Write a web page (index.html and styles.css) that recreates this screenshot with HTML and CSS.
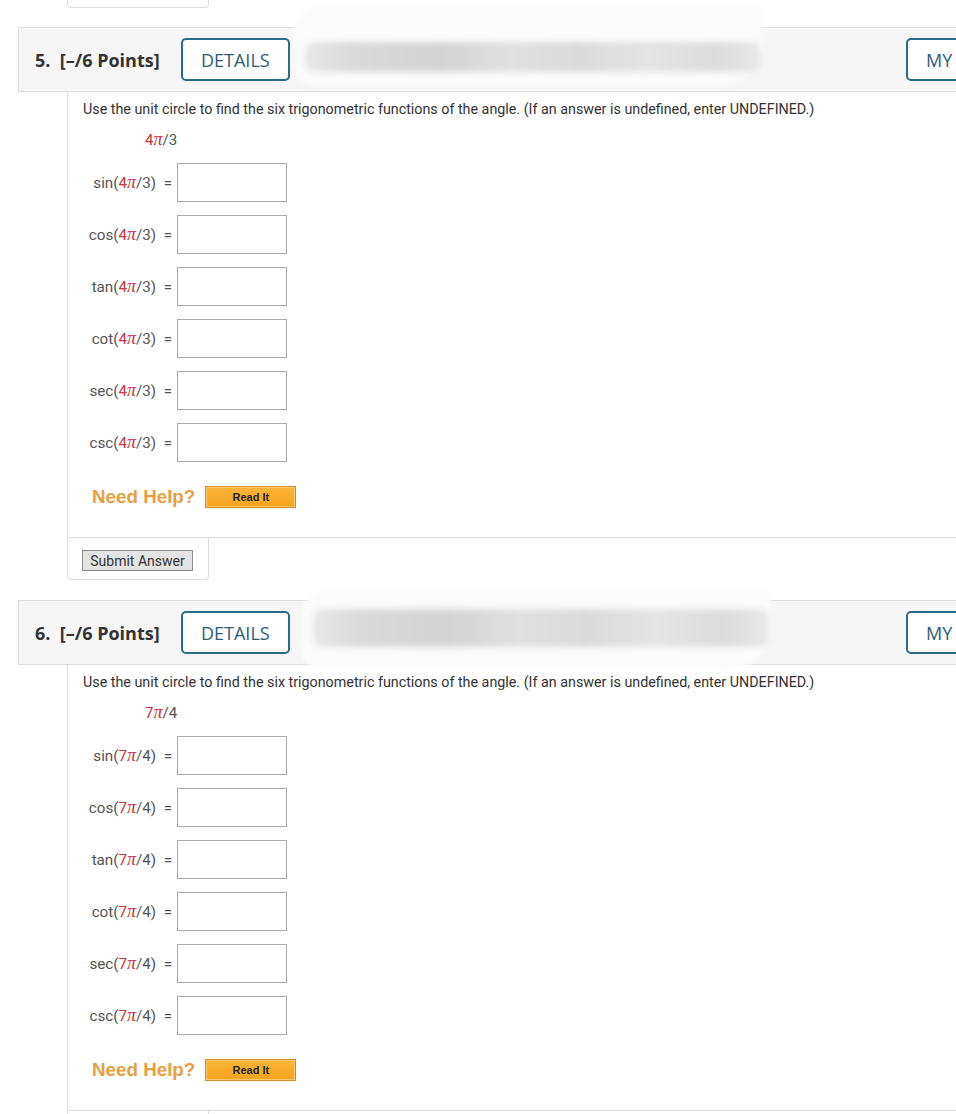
FILE: index.html
```html
<!DOCTYPE html>
<html>
	<head>
		<link rel="stylesheet" href="styles.css">
		<title>Unit circle questions</title>
	</head>
	<body>
		<div class="prevSubmit"></div>

		<!-- question 5 -->
		<div class="question">
			<div class="qhead">
				<span class="qtitle">5.&nbsp; [&ndash;/6 Points]</span>
				<span class="headButton">DETAILS</span>
				<span class="headButton myButton">MY</span>
				<div class="smear"><div class="smearBand"></div></div>
			</div>
			<div class="qbody">
				<div class="prompt">Use the unit circle to find the six trigonometric functions of the angle. (If an answer is undefined, enter UNDEFINED.)</div>
				<div class="angle"><span class="red">4<i class="pi">&pi;</i></span>/3</div>
				<div class="row"><span class="lbl">sin(<span class="red">4<i class="pi">&pi;</i></span>/3)&nbsp; =</span><input class="answer" type="text"></div>
				<div class="row"><span class="lbl">cos(<span class="red">4<i class="pi">&pi;</i></span>/3)&nbsp; =</span><input class="answer" type="text"></div>
				<div class="row"><span class="lbl">tan(<span class="red">4<i class="pi">&pi;</i></span>/3)&nbsp; =</span><input class="answer" type="text"></div>
				<div class="row"><span class="lbl">cot(<span class="red">4<i class="pi">&pi;</i></span>/3)&nbsp; =</span><input class="answer" type="text"></div>
				<div class="row"><span class="lbl">sec(<span class="red">4<i class="pi">&pi;</i></span>/3)&nbsp; =</span><input class="answer" type="text"></div>
				<div class="row"><span class="lbl">csc(<span class="red">4<i class="pi">&pi;</i></span>/3)&nbsp; =</span><input class="answer" type="text"></div>
				<div class="help">
					<span class="needHelp">Need Help?</span>
					<span class="readIt">Read It</span>
				</div>
			</div>
			<div class="submitBox"><button class="submitButton">Submit Answer</button></div>
		</div>

		<!-- question 6 -->
		<div class="question">
			<div class="qhead">
				<span class="qtitle">6.&nbsp; [&ndash;/6 Points]</span>
				<span class="headButton">DETAILS</span>
				<span class="headButton myButton">MY</span>
				<div class="smear smear6"><div class="smearBand"></div></div>
			</div>
			<div class="qbody">
				<div class="prompt">Use the unit circle to find the six trigonometric functions of the angle. (If an answer is undefined, enter UNDEFINED.)</div>
				<div class="angle"><span class="red">7<i class="pi">&pi;</i></span>/4</div>
				<div class="row"><span class="lbl">sin(<span class="red">7<i class="pi">&pi;</i></span>/4)&nbsp; =</span><input class="answer" type="text"></div>
				<div class="row"><span class="lbl">cos(<span class="red">7<i class="pi">&pi;</i></span>/4)&nbsp; =</span><input class="answer" type="text"></div>
				<div class="row"><span class="lbl">tan(<span class="red">7<i class="pi">&pi;</i></span>/4)&nbsp; =</span><input class="answer" type="text"></div>
				<div class="row"><span class="lbl">cot(<span class="red">7<i class="pi">&pi;</i></span>/4)&nbsp; =</span><input class="answer" type="text"></div>
				<div class="row"><span class="lbl">sec(<span class="red">7<i class="pi">&pi;</i></span>/4)&nbsp; =</span><input class="answer" type="text"></div>
				<div class="row"><span class="lbl">csc(<span class="red">7<i class="pi">&pi;</i></span>/4)&nbsp; =</span><input class="answer" type="text"></div>
				<div class="help">
					<span class="needHelp">Need Help?</span>
					<span class="readIt">Read It</span>
				</div>
			</div>
			<div class="submitBox"><button class="submitButton">Submit Answer</button></div>
		</div>
	</body>
</html>
```

FILE: styles.css
```css
body {
	margin: 0;
	background: #fff;
	overflow: hidden;
	font-family: Roboto, "Liberation Sans", sans-serif;
	color: #333;
}
.prevSubmit {
	margin-left: 67px;
	width: 142px;
	height: 8px;
	box-sizing: border-box;
	border: 1px solid #ddd;
	border-top: none;
	border-radius: 0 0 4px 4px;
}
.question {
	margin-top: 19px;
	margin-left: 18px;
	width: 1100px;
}
.qhead {
	position: relative;
	width: 1015px;
	height: 65px;
	box-sizing: border-box;
	display: flex;
	align-items: center;
	padding: 0 16px;
	background: #f6f6f6;
	border: 1px solid #dedede;
}
.qtitle {
	font-family: "Open Sans", sans-serif;
	font-weight: 700;
	font-size: 18px;
	color: #333;
	width: 146px;
	white-space: nowrap;
}
.headButton {
	height: 43px;
	box-sizing: border-box;
	padding: 0 18px;
	display: flex;
	align-items: center;
	border: 2px solid #2d6a86;
	border-radius: 5px;
	background: #fff;
	font-family: "Open Sans", sans-serif;
	font-size: 18px;
	color: #2b5e78;
}
.myButton {
	margin-left: auto;
	width: 110px;
}
.smear {
	position: absolute;
	left: 274px;
	top: -22px;
	width: 470px;
	height: 79px;
	background: #fbfbfb;
	border-radius: 30px 4px 40px 20px;
	filter: blur(2px);
}
.smear6 {
	left: 282px;
	top: -12px;
	height: 80px;
}
.smear .smearBand {
	margin: 36px 2px 0 12px;
	height: 30px;
	border-radius: 10px;
	background: linear-gradient(90deg, #e8e8e8, #dadada 10%, #d4d4d4 30%, #e0e0e0 45%, #dadada 60%, #e4e4e4 75%, #dcdcdc 90%, #e8e8e8);
	filter: blur(2px);
}
.smear6 .smearBand {
	margin-top: 20px;
	height: 38px;
}
.qbody {
	margin-left: 49px;
	border-left: 1px solid #ddd;
	border-bottom: 1px solid #ddd;
	padding: 7px 0 0 15px;
	height: 446px;
	box-sizing: border-box;
}
.prompt {
	font-size: 14.3px;
	line-height: 20px;
	color: #333;
	white-space: nowrap;
}
.angle {
	margin-top: 10px;
	margin-left: 62px;
	font-size: 15px;
	line-height: 20px;
	color: #555;
}
.red {
	color: #c8343a;
}
.pi {
	font-family: "Liberation Serif", serif;
	font-size: 18px;
}
.row {
	display: flex;
	align-items: center;
	margin-top: 13px;
	margin-left: -15px;
}
.lbl {
	width: 104px;
	text-align: right;
	padding-right: 5px;
	font-size: 15.2px;
	color: #555;
	white-space: nowrap;
}
.answer {
	width: 110px;
	height: 39px;
	box-sizing: border-box;
	margin: 0;
	border: 1px solid #a9a9a9;
	background: #fff;
}
.help {
	display: flex;
	align-items: center;
	margin-top: 24px;
	margin-left: 9px;
}
.needHelp {
	font-family: "Liberation Sans", Arial, sans-serif;
	font-weight: 700;
	font-size: 18.8px;
	color: #e8a040;
	margin-right: 10px;
}
.readIt {
	width: 91px;
	height: 22px;
	box-sizing: border-box;
	display: flex;
	align-items: center;
	justify-content: center;
	background: linear-gradient(#fbb53a, #f6a31d);
	border: 1px solid #d88a26;
	box-shadow: inset 0 0 0 1px #fcc76a;
	font-family: "Liberation Sans", Arial, sans-serif;
	font-weight: 700;
	font-size: 11px;
	color: #222;
}
.submitBox {
	margin-left: 49px;
	width: 142px;
	height: 42px;
	box-sizing: border-box;
	border: 1px solid #ddd;
	border-top: none;
	border-radius: 0 0 4px 4px;
	padding-top: 12px;
	padding-left: 14px;
	margin-bottom: 20px;
}
.submitButton {
	display: block;
	width: 111px;
	height: 21px;
	padding: 0;
	margin: 0;
	border: 1px solid #8a8a8a;
	background: #e4e4e4;
	font-family: Roboto, "Liberation Sans", sans-serif;
	font-size: 14px;
	color: #333;
}
```
